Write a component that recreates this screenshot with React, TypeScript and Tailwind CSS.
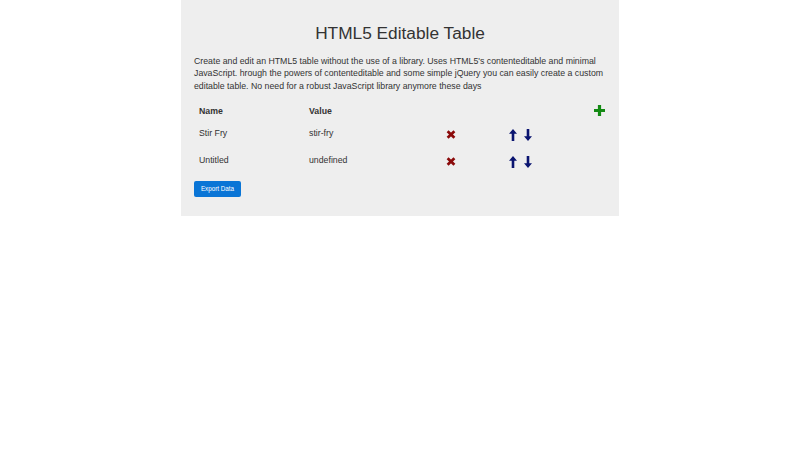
import React from "react";

const XIcon = () => (
  <svg width="10" height="9" viewBox="0 0 10 9" className="block">
    <path d="M1.6 1.2 L8.4 7.8 M8.4 1.2 L1.6 7.8" stroke="#8b0a0a" strokeWidth="2.7" strokeLinecap="butt" />
  </svg>
);

const UpIcon = () => (
  <svg width="8" height="12" viewBox="0 0 8 12" className="block">
    <polygon points="4,0 8,4.8 5.3,4.8 5.3,12 2.7,12 2.7,4.8 0,4.8" fill="#0a1470" />
  </svg>
);

const DownIcon = () => (
  <svg width="8" height="12" viewBox="0 0 8 12" className="block">
    <polygon points="4,12 8,7.2 5.3,7.2 5.3,0 2.7,0 2.7,7.2 0,7.2" fill="#0a1470" />
  </svg>
);

const PlusIcon = () => (
  <svg width="11" height="11" viewBox="0 0 11 11" className="block">
    <path d="M3.9 0 H7.1 V3.9 H11 V7.1 H7.1 V11 H3.9 V7.1 H0 V3.9 H3.9 Z" fill="#138a13" />
  </svg>
);

const rows = [
  { name: "Stir Fry", value: "stir-fry" },
  { name: "Untitled", value: "undefined" },
];

export default function App() {
  return (
    <div className="w-[800px] h-[450px] bg-white text-[#333]" style={{ fontFamily: '"Liberation Sans", Arial, sans-serif' }}>
      <div className="mx-auto w-[438px] bg-[#eeeeee] px-[13px] pt-[23px] pb-[19px]">
        <h1 className="text-center text-[17.3px] leading-[20px] font-normal text-[#333]">HTML5 Editable Table</h1>
        <p className="mt-[11.5px] text-[8.75px] leading-[12.5px]">
          Create and edit an HTML5 table without the use of a library. Uses HTML5's contenteditable and minimal JavaScript. hrough the powers of contenteditable and some simple jQuery you can easily create a custom editable table. No need for a robust JavaScript library anymore these days
        </p>
        <div className="mt-[8px] text-[8.75px] leading-[12.5px]">
          <div className="flex h-[21.5px]">
            <div className="w-[110px] pl-[5px] pt-[5px] font-bold">Name</div>
            <div className="w-[136px] pl-[5px] pt-[5px] font-bold">Value</div>
            <div className="w-[63px]" />
            <div className="flex-1 flex justify-end pt-[5px] pr-[1px]">
              <PlusIcon />
            </div>
          </div>
          {rows.map((r) => (
            <div key={r.name} className="flex h-[27px]">
              <div className="w-[110px] pl-[5px] pt-[5px]">{r.name}</div>
              <div className="w-[136px] pl-[5px] pt-[5px]">{r.value}</div>
              <div className="w-[63px] pl-[5.5px] pt-[8.5px]">
                <XIcon />
              </div>
              <div className="flex-1 flex gap-[7px] pl-[5.5px] pt-[7px]">
                <UpIcon />
                <DownIcon />
              </div>
            </div>
          ))}
        </div>
        <button className="mt-[5px] block w-[47px] h-[16px] rounded-[2px] bg-[#0a75d6] text-white text-[6.3px] leading-[16px] text-center">
          Export Data
        </button>
      </div>
    </div>
  );
}
